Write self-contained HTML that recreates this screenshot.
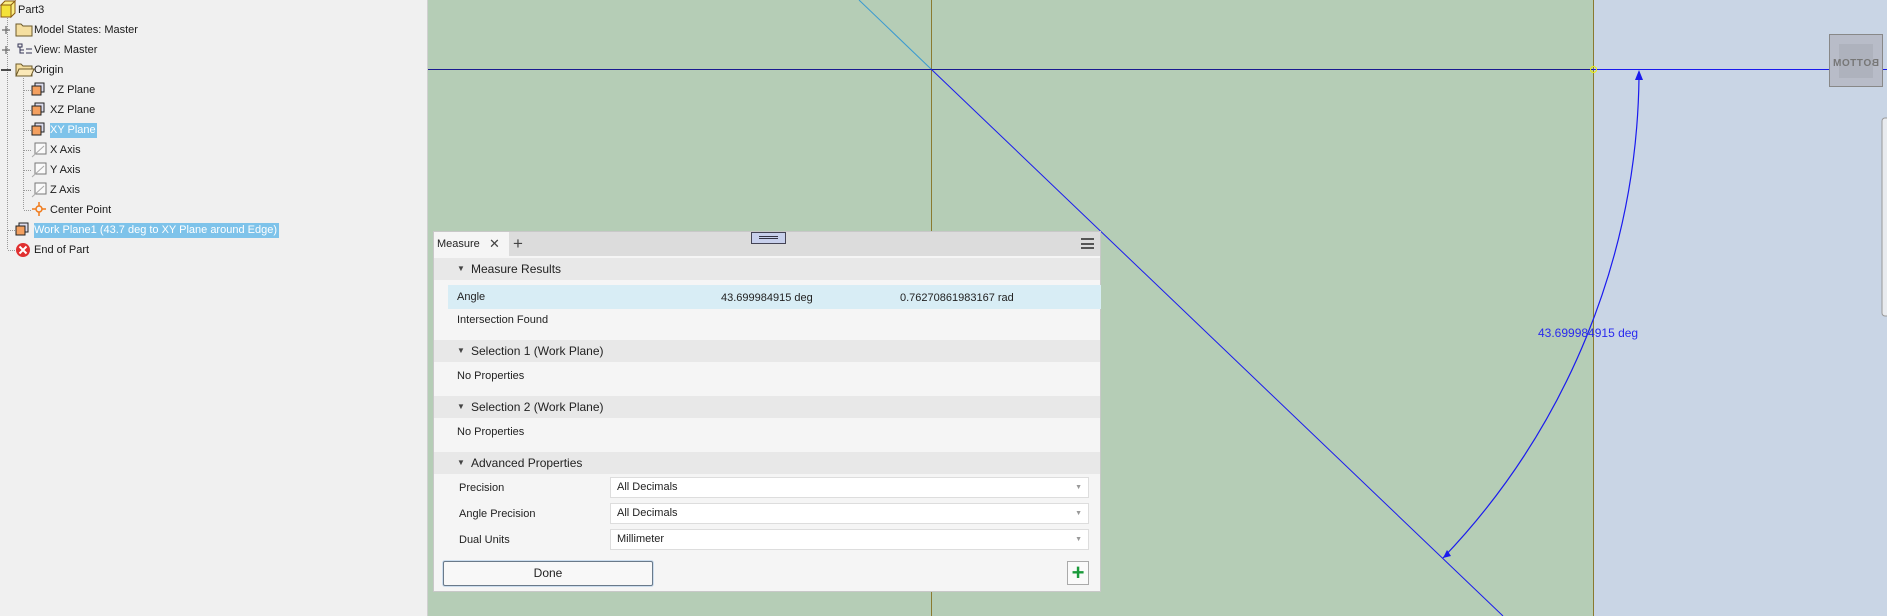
<!DOCTYPE html>
<html><head><meta charset="utf-8"><style>
*{margin:0;padding:0;box-sizing:border-box}
body{width:1887px;height:616px;overflow:hidden;position:relative;font-family:"Liberation Sans",sans-serif;background:#b5cdb6}
#tree{position:absolute;left:0;top:0;width:428px;height:616px;background:#f0f0f0;border-right:1px solid #d0d0d0;font-size:11px;color:#1a1a1a}
.r{position:absolute;height:15px;line-height:15px;white-space:nowrap}
.sel{background:#7ec3ea;color:#fff}
#view2{position:absolute;left:1593px;top:0;width:294px;height:616px;background:#c9d5e5}
svg{position:absolute;left:0;top:0}
#panel{position:absolute;left:433px;top:231px;width:668px;height:361px;background:#f5f5f5;border:1px solid #c8c8c8;font-size:11px;color:#222}
.tabbar{position:absolute;left:0;top:0;width:100%;height:24px;background:#dcdcdc}
.tab{position:absolute;left:0;top:0;width:75px;height:24px;background:#f5f5f5;line-height:24px;padding-left:3px}
.hd{position:absolute;left:0;width:100%;height:22px;background:#e8e8e8;line-height:22px;font-size:12px}
.hd span{position:absolute;left:37px}
.hd b{position:absolute;left:23px;font-size:8px;font-weight:normal;color:#444}
.t{position:absolute;line-height:14px;white-space:nowrap}
.dd{position:absolute;left:176px;width:479px;height:21px;background:#fff;border:1px solid #ddd;line-height:19px;padding-left:6px}
.dd:after{content:"▼";position:absolute;right:6px;top:0;font-size:7px;color:#999}
</style></head><body>
<div id="tree">
<svg width="428" height="616">
<g stroke="#999" stroke-dasharray="1,1" fill="none">
<line x1="7.5" y1="18" x2="7.5" y2="250"/>
<line x1="8" y1="250.5" x2="16" y2="250.5"/>
<line x1="8" y1="230.5" x2="16" y2="230.5"/>
<line x1="23.5" y1="78" x2="23.5" y2="210"/>
<line x1="24" y1="90.5" x2="32" y2="90.5"/><line x1="24" y1="110.5" x2="32" y2="110.5"/><line x1="24" y1="130.5" x2="32" y2="130.5"/><line x1="24" y1="150.5" x2="32" y2="150.5"/><line x1="24" y1="170.5" x2="32" y2="170.5"/><line x1="24" y1="190.5" x2="32" y2="190.5"/><line x1="24" y1="210.5" x2="32" y2="210.5"/>
</g>
<g stroke="#666" stroke-width="1.2"><line x1="2" y1="30" x2="10" y2="30"/><line x1="6" y1="26" x2="6" y2="34"/><line x1="2" y1="50" x2="10" y2="50"/><line x1="6" y1="46" x2="6" y2="54"/><line x1="1" y1="70" x2="11" y2="70" stroke="#222" stroke-width="1.6"/></g>
<path d="M1 5h10v12H1z" fill="#f4e23a" stroke="#8a5a10"/><path d="M1 5l4-4h10l-4 4zM11 5l4-4v12l-4 4z" fill="#fbee80" stroke="#8a5a10"/>
<path d="M16 24h5l2 2h9v10H16z" fill="#f5dfa0" stroke="#6d5a2a"/>
<path d="M16 64h5l2 2h9v10H16z" fill="#f5dfa0" stroke="#6d5a2a"/><path d="M16 76l3-7h15l-3 7z" fill="#fbe9b8" stroke="#6d5a2a"/>
<path d="M18 44h4v3h-4zM20 47v6h4M20 50h4M26 49h6M26 53h6" fill="none" stroke="#335" />
<g stroke="#222"><rect x="35" y="83" width="9" height="9" fill="#dde" /><rect x="32" y="86" width="9" height="9" fill="#f3a060"/>
<rect x="35" y="103" width="9" height="9" fill="#dde" /><rect x="32" y="106" width="9" height="9" fill="#f3a060"/>
<rect x="35" y="123" width="9" height="9" fill="#dde" /><rect x="32" y="126" width="9" height="9" fill="#f3a060"/>
<rect x="19" y="223" width="9" height="9" fill="#dde" /><rect x="16" y="226" width="9" height="9" fill="#f3a060"/></g>
<g stroke="#777" fill="#fafafa"><rect x="35" y="143" width="11" height="11"/><rect x="35" y="163" width="11" height="11"/><rect x="35" y="183" width="11" height="11"/></g>
<g stroke="#aaa"><line x1="32" y1="157" x2="44" y2="146"/><line x1="32" y1="177" x2="44" y2="166"/><line x1="32" y1="197" x2="44" y2="186"/></g>
<g stroke="#f07a1a" fill="none" stroke-width="1.5"><circle cx="39" cy="209" r="3"/><path d="M39 202v4M39 212v4M32 209h4M42 209h4"/></g>
<circle cx="23" cy="250" r="7" fill="#e03030"/><path d="M19.5 246.5l7 7M26.5 246.5l-7 7" stroke="#fff" stroke-width="2"/>
</svg>
<div class="r" style="left:18px;top:3px">Part3</div>
<div class="r" style="left:34px;top:23px">Model States: Master</div>
<div class="r" style="left:34px;top:43px">View: Master</div>
<div class="r" style="left:34px;top:63px">Origin</div>
<div class="r" style="left:50px;top:83px">YZ Plane</div>
<div class="r" style="left:50px;top:103px">XZ Plane</div>
<div class="r sel" style="left:50px;top:123px;padding-right:1px">XY Plane</div>
<div class="r" style="left:50px;top:143px">X Axis</div>
<div class="r" style="left:50px;top:163px">Y Axis</div>
<div class="r" style="left:50px;top:183px">Z Axis</div>
<div class="r" style="left:50px;top:203px">Center Point</div>
<div class="r sel" style="left:34px;top:223px;padding-right:2px">Work Plane1 (43.7 deg to XY Plane around Edge)</div>
<div class="r" style="left:34px;top:243px">End of Part</div>
</div>
<div id="view2"></div>
<svg width="1887" height="616" style="left:0;top:0">
<line x1="931.5" y1="0" x2="931.5" y2="616" stroke="#8a7a30"/>
<line x1="1593.5" y1="0" x2="1593.5" y2="616" stroke="#8a7a30"/>
<line x1="428" y1="69.5" x2="1593" y2="69.5" stroke="#1a1a90"/>
<line x1="1593" y1="69.5" x2="1887" y2="69.5" stroke="#1a1aee"/>
<line x1="859" y1="0" x2="931" y2="69" stroke="#3a9ad0"/>
<line x1="931" y1="69" x2="1503" y2="616" stroke="#1a1aee"/>
<path d="M1639 78 A708 708 0 0 1 1443 558" fill="none" stroke="#1a1aee" stroke-width="1.2"/>
<path d="M1639 70l-4 10h8z" fill="#1a1aee"/>
<path d="M1443 558l8-2-4-6z" fill="#1a1aee"/>
<circle cx="1593.5" cy="69.5" r="3" fill="none" stroke="#ee0"/>
<rect x="1829.5" y="34.5" width="53" height="52" fill="#b8bcc8" stroke="#888"/>
<rect x="1839" y="44" width="34" height="34" fill="#aeb2bd"/>
<text x="0" y="0" transform="translate(1879,66) scale(-1,1)" font-family="Liberation Sans" font-weight="bold" font-size="10" textLength="46" fill="#777">BOTTOM</text>
<path d="M1887 118h-2a3 3 0 0 0-3 3v192a3 3 0 0 0 3 3h2" fill="#e8ebef" stroke="#999"/>
<text x="1538" y="337" font-family="Liberation Sans" font-size="12" fill="#2a2aee">43.699984915 deg</text>
</svg>
<div id="panel">
<div class="tabbar">
<div class="tab">Measure <span style="position:absolute;left:55px;top:0;font-size:13px;color:#444">✕</span></div>
<span style="position:absolute;left:79px;top:0;line-height:24px;font-size:17px;color:#444">+</span>
<div style="position:absolute;left:317px;top:0;width:35px;height:12px;background:#c8d0ec;border:1px solid #445"><div style="margin:3px 7px 0;height:3px;border-top:1px solid #334;border-bottom:1px solid #334"></div></div>
<div style="position:absolute;left:647px;top:6px;width:13px;height:11px;border-top:2px solid #555;border-bottom:2px solid #555"><div style="margin-top:2.5px;border-top:2px solid #555"></div></div>
</div>
<div class="hd" style="top:26px"><b>▼</b><span>Measure Results</span></div>
<div style="position:absolute;left:14px;top:53px;width:653px;height:24px;background:#d8edf5"></div>
<div class="t" style="left:23px;top:58px">Angle</div>
<div class="t" style="left:287px;top:59px">43.699984915 deg</div>
<div class="t" style="left:466px;top:59px">0.76270861983167 rad</div>
<div class="t" style="left:23px;top:81px">Intersection Found</div>
<div class="hd" style="top:108px"><b>▼</b><span>Selection 1 (Work Plane)</span></div>
<div class="t" style="left:23px;top:137px">No Properties</div>
<div class="hd" style="top:164px"><b>▼</b><span>Selection 2 (Work Plane)</span></div>
<div class="t" style="left:23px;top:193px">No Properties</div>
<div class="hd" style="top:220px"><b>▼</b><span>Advanced Properties</span></div>
<div class="t" style="left:25px;top:249px">Precision</div>
<div class="dd" style="top:245px">All Decimals</div>
<div class="t" style="left:25px;top:275px">Angle Precision</div>
<div class="dd" style="top:271px">All Decimals</div>
<div class="t" style="left:25px;top:301px">Dual Units</div>
<div class="dd" style="top:297px">Millimeter</div>
<div style="position:absolute;left:9px;top:329px;width:210px;height:25px;border:1px solid #6a7a8a;border-radius:2px;background:#f8f8f8;text-align:center;line-height:23px;font-size:12px;box-shadow:0 0 0 1px #cde">Done</div>
<div style="position:absolute;left:633px;top:329px;width:22px;height:24px;border:1px solid #aaa;background:#fafafa;text-align:center;line-height:22px;font-size:22px;font-weight:bold;color:#1a9a3a">+</div>
</div>
</body></html>
